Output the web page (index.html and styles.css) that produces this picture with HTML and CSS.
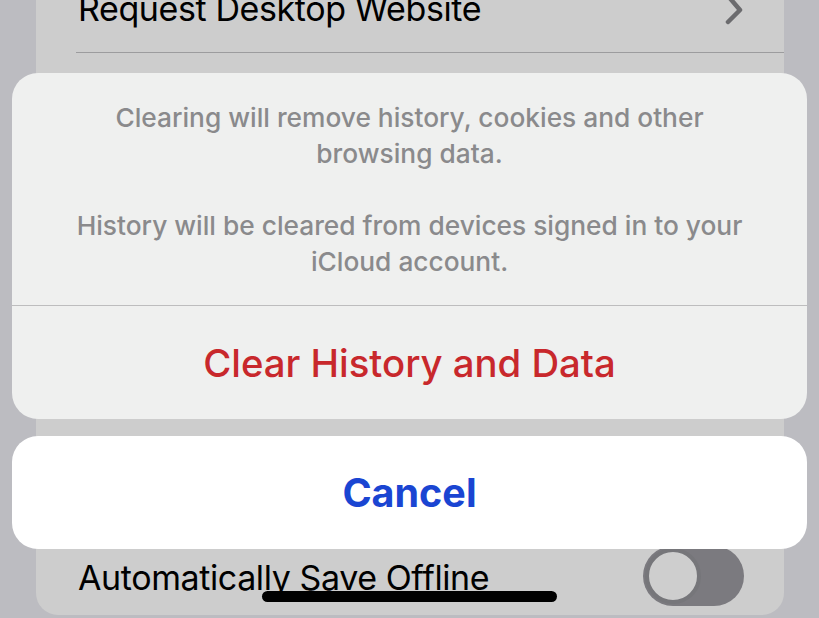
FILE: index.html
```html
<!DOCTYPE html>
<html>
<head>
<meta charset="utf-8">
<link rel="stylesheet" href="styles.css">
</head>
<body>
<div class="screen">
  <div class="settings">
    <div class="row row-top">
      <span class="label">Request Desktop Website</span>
      <svg class="chevron" width="20" height="30" viewBox="0 0 20 30"><path d="M4 -4 L16 10 L4 22" fill="none" stroke="#6b6b6e" stroke-width="4.5" stroke-linecap="round" stroke-linejoin="round"/></svg>
    </div>
    <div class="sep"></div>
    <div class="spacer"></div>
    <div class="row row-bottom">
      <span class="label">Automatically Save Offline</span>
      <span class="toggle"><span class="knob"></span></span>
    </div>
  </div>

  <div class="sheet">
    <div class="group">
      <div class="message">
        <p>Clearing will remove history, cookies and other<br>browsing data.</p>
        <p>History will be cleared from devices signed in to your<br>iCloud account.</p>
      </div>
      <div class="action destructive">Clear History and Data</div>
    </div>
    <div class="cancel">Cancel</div>
  </div>

  <div class="home-indicator"></div>
</div>
</body>
</html>
```

FILE: styles.css
```css
html, body {
  margin: 0;
  padding: 0;
}
body {
  background: #bcbcc1;
  font-family: Inter, "Noto Sans", sans-serif;
  overflow: hidden;
}
.screen {
  position: relative;
  width: 819px;
  height: 618px;
  overflow: hidden;
}
.settings {
  margin: 0 35px 0 36px;
  height: 615px;
  background: #cdcdcd;
  border-radius: 0 0 22px 22px;
  display: flex;
  flex-direction: column;
}
.row {
  display: flex;
  align-items: center;
  justify-content: space-between;
  padding-left: 42px;
}
.label {
  font-size: 34px;
  line-height: 34px;
  color: #000;
  font-weight: 400;
  letter-spacing: -0.4px;
}
.row-top {
  height: 52px;
  align-items: flex-start;
  padding-right: 40px;
}
.row-top .label {
  margin-top: -8px;
}
.sep {
  height: 1px;
  background: #9c9c9e;
  margin-left: 40px;
}
.spacer {
  flex: 1;
}
.row-bottom {
  height: 78px;
  padding-right: 40px;
}
.row-bottom .label {
  margin-top: 4px;
}
.toggle {
  width: 101px;
  height: 60px;
  border-radius: 30px;
  background: #7b7a7f;
  display: flex;
  align-items: center;
  padding-left: 2px;
  box-sizing: border-box;
}
.knob {
  width: 56px;
  height: 56px;
  border-radius: 50%;
  background: #cecece;
  box-sizing: border-box;
  border: 4px solid #76767a;
}
.sheet {
  position: absolute;
  left: 12px;
  right: 12px;
  top: 73px;
  display: flex;
  flex-direction: column;
  gap: 17px;
}
.group {
  background: #eff0ef;
  border-radius: 26px;
  overflow: hidden;
}
.message {
  padding: 27px 10px 25px;
  text-align: center;
  color: #8a8a8c;
  font-size: 26.3px;
  font-weight: 500;
  line-height: 36px;
  border-bottom: 1px solid #bdbdbe;
}
.message p {
  margin: 0;
}
.message p + p {
  margin-top: 36px;
}
.action {
  height: 113px;
  display: flex;
  align-items: center;
  justify-content: center;
  font-size: 38.3px;
}
.destructive {
  color: #c8282c;
  font-weight: 500;
}
.cancel {
  height: 113px;
  background: #fff;
  border-radius: 26px;
  display: flex;
  align-items: center;
  justify-content: center;
  font-size: 39.5px;
  font-weight: 700;
  color: #1a45d2;
}
.home-indicator {
  position: absolute;
  left: 262px;
  top: 591px;
  width: 295px;
  height: 11px;
  border-radius: 6px;
  background: #000;
}
```
